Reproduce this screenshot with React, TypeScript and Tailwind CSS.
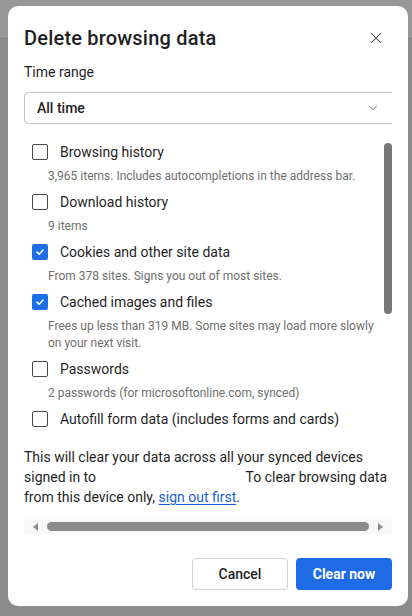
import { ChevronDown, X } from 'lucide-react';

type Item = { label: string; sub?: string[]; checked: boolean };

const items: Item[] = [
  { label: 'Browsing history', sub: ['3,965 items. Includes autocompletions in the address bar.'], checked: false },
  { label: 'Download history', sub: ['9 items'], checked: false },
  { label: 'Cookies and other site data', sub: ['From 378 sites. Signs you out of most sites.'], checked: true },
  {
    label: 'Cached images and files',
    sub: ['Frees up less than 319 MB. Some sites may load more slowly', 'on your next visit.'],
    checked: true,
  },
  { label: 'Passwords', sub: ['2 passwords (for microsoftonline.com, synced)'], checked: false },
  { label: 'Autofill form data (includes forms and cards)', checked: false },
];

function Checkbox({ checked }: { checked: boolean }) {
  if (checked) {
    return (
      <div className="w-4 h-4 rounded-[2px] bg-[#1a6ee6] flex items-center justify-center shrink-0">
        <svg width="10" height="10" viewBox="0 0 10 10" fill="none">
          <path d="M2 5.2 L4.1 7.2 L8 3" stroke="white" strokeWidth="1.6" strokeLinecap="round" strokeLinejoin="round" />
        </svg>
      </div>
    );
  }
  return <div className="w-4 h-4 rounded-[2px] border-[1.5px] border-[#474747] shrink-0" />;
}

export default function App() {
  return (
    <div className="relative w-[412px] h-[616px] bg-[#8b8b8b] overflow-hidden" style={{ fontFamily: 'Roboto, "Noto Sans", sans-serif' }}>
      <div className="h-[37px] bg-[#979797] border-b border-[#a3a3a3]" />

      <div className="absolute left-2 top-[6px] w-[400px] h-[600px] bg-white rounded-[10px] flex flex-col pl-4 pr-4 pt-[18px] pb-4">
        <div className="flex items-center justify-between h-7">
          <h1 className="text-[20px] leading-7 font-medium text-[#1f1f1f] tracking-[0.2px]">Delete browsing data</h1>
          <X className="w-[18px] h-[18px] mr-[7px] text-[#3c3c3c]" strokeWidth={1.4} />
        </div>

        <div className="mt-[10px] text-[14px] leading-5 text-[#1f1f1f]">Time range</div>

        <div className="mt-[10px] h-8 border border-r-0 border-[#c7c7c7] rounded-l-[4px] flex items-center justify-between pl-3 pr-3">
          <span className="text-[14px] font-medium text-[#1f1f1f]">All time</span>
          <ChevronDown className="w-[14px] h-[14px] text-[#6a6a6a]" strokeWidth={1.5} />
        </div>

        <div className="relative mt-[9px] h-[298px] overflow-hidden">
          <div className="pt-[7px] pl-2">
            {items.map((it) => (
              <div key={it.label}>
                <div className="h-6 flex items-center gap-3">
                  <Checkbox checked={it.checked} />
                  <span className="text-[14px] text-[#1f1f1f]">{it.label}</span>
                </div>
                {it.sub && (
                  <div className="pl-4 pt-[4px] pb-[5px] text-[12px] leading-[17px] text-[#6e6e6e]">
                    {it.sub.map((s) => (
                      <div key={s}>{s}</div>
                    ))}
                  </div>
                )}
              </div>
            ))}
          </div>
          <div className="absolute right-0 top-[10px] w-2 h-[171px] rounded-full bg-[#777777]" />
        </div>

        <p className="mt-4 text-[14px] leading-5 text-[#1f1f1f]">
          This will clear your data across all your synced devices
          <br />
          signed in to <span className="inline-block w-[146px]" />To clear browsing data
          <br />
          from this device only,{' '}
          <a className="text-[#1a5fd8] underline underline-offset-2">sign out first</a>.
        </p>

        <div className="mt-[12px] h-[15px] bg-[#f8f8f8] flex items-center px-[9px] gap-2">
          <svg width="6" height="8" viewBox="0 0 6 8">
            <path d="M5 0 L0 4 L5 8 Z" fill="#8b8b8b" />
          </svg>
          <div className="flex-1 h-[9px] rounded-full bg-[#8b8b8b]" />
          <svg width="6" height="8" viewBox="0 0 6 8">
            <path d="M1 0 L6 4 L1 8 Z" fill="#8b8b8b" />
          </svg>
        </div>

        <div className="mt-auto flex justify-end gap-2">
          <button className="w-24 h-8 rounded-[4px] border border-[#d3d3d3] text-[14px] font-medium text-[#1f1f1f] bg-white">
            Cancel
          </button>
          <button className="w-24 h-8 rounded-[4px] bg-[#1f6be6] text-[14px] font-bold text-white">Clear now</button>
        </div>
      </div>
    </div>
  );
}
